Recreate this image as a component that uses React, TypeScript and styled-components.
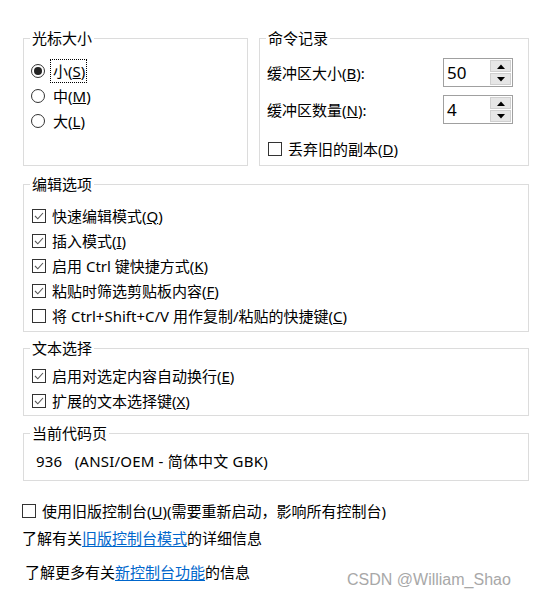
import React from "react";
import styled, { createGlobalStyle } from "styled-components";

const GlobalStyle = createGlobalStyle`
  html, body {
    margin: 0;
    background: #ffffff;
  }
  body {
    font-family: "Noto Sans", "Noto Sans CJK SC", sans-serif;
    font-size: 15px;
    color: #000;
  }
`;

const Page = styled.div`
  position: relative;
  width: 551px;
  height: 600px;
  padding: 29px 0 0 23px;
  box-sizing: border-box;
`;

const Content = styled.div`
  width: 506px;
`;

const TopRow = styled.div`
  display: grid;
  grid-template-columns: 225px 270px;
  column-gap: 11px;
  align-items: stretch;
`;

const Group = styled.fieldset<{ $mt?: number; $pt?: number; $pb?: number }>`
  margin: ${(p) => p.$mt ?? 0}px 0 0 0;
  padding: ${(p) => p.$pt ?? 0}px 7px ${(p) => p.$pb ?? 0}px 7px;
  border: 1px solid #dcdcdc;
  min-width: 0;
  box-sizing: border-box;
`;

const Legend = styled.legend`
  margin-left: -1px;
  padding: 0 2px;
  font-size: 15px;
  line-height: 18px;
  height: 18px;
`;

const Row = styled.div`
  display: flex;
  align-items: center;
  height: 25px;
  line-height: 20px;
  white-space: nowrap;
`;

const RadioCircle = styled.span<{ $checked?: boolean }>`
  width: 14px;
  height: 14px;
  border: 1px solid #333;
  border-radius: 50%;
  box-sizing: border-box;
  display: flex;
  align-items: center;
  justify-content: center;
  margin-right: 8px;
  flex: none;
  &::after {
    content: "";
    width: 8px;
    height: 8px;
    border-radius: 50%;
    background: #222;
    display: ${(p) => (p.$checked ? "block" : "none")};
  }
`;

const FocusText = styled.span<{ $focus?: boolean }>`
  outline: ${(p) => (p.$focus ? "1px dotted #000" : "none")};
  outline-offset: 0;
  padding: 1px 1px 1px 2px;
  margin-left: -2px;
`;

const Box = styled.span<{ $ml?: number }>`
  width: 14px;
  height: 14px;
  border: 1px solid #333;
  box-sizing: border-box;
  margin-left: ${(p) => p.$ml ?? 1}px;
  margin-right: 6px;
  flex: none;
  display: flex;
  align-items: center;
  justify-content: center;
`;

const FieldRow = styled.div<{ $mt?: number }>`
  display: grid;
  grid-template-columns: 176px 70px;
  align-items: center;
  margin-top: ${(p) => p.$mt ?? 0}px;
  height: 29px;
  white-space: nowrap;
`;

const Spinner = styled.div`
  display: flex;
  width: 70px;
  height: 29px;
  border: 1px solid #a0a0a0;
  box-sizing: border-box;
  background: #fff;
`;

const SpinValue = styled.div`
  flex: 1;
  padding-left: 3px;
  font-size: 17px;
  line-height: 27px;
`;

const SpinButtons = styled.div`
  width: 22px;
  display: flex;
  flex-direction: column;
  gap: 1px;
  padding: 1px 1px 1px 0;
  box-sizing: border-box;
`;

const SpinButton = styled.div`
  flex: 1;
  background: #e6e6e6;
  border: 1px solid #cfcfcf;
  display: flex;
  align-items: center;
  justify-content: center;
`;

const CodePage = styled.div`
  padding-left: 5px;
  line-height: 20px;
  height: 20px;
  white-space: pre;
  letter-spacing: 0.2px;
`;

const Bottom = styled.div`
  margin-top: 17px;
`;

const InfoLine = styled.div<{ $ml?: number; $mt?: number }>`
  margin-left: ${(p) => p.$ml ?? 0}px;
  margin-top: ${(p) => p.$mt ?? 0}px;
  height: 25px;
  line-height: 25px;
  white-space: nowrap;
`;

const Link = styled.a`
  color: #0066cc;
  text-decoration: underline;
  text-underline-offset: 2px;
`;

const Watermark = styled.div`
  position: absolute;
  left: 347px;
  top: 571px;
  font-family: "Liberation Sans", Arial, sans-serif;
  font-size: 16px;
  color: #a8a8a8;
  white-space: nowrap;
`;

const Check = () => (
  <svg width="12" height="12" viewBox="0 0 12 12">
    <path d="M2 6 L4.8 8.8 L10 3" fill="none" stroke="#555" strokeWidth="1.1" />
  </svg>
);

const Arrow = ({ up }: { up?: boolean }) => (
  <svg width="8" height="5" viewBox="0 0 8 5">
    <path d={up ? "M0 5 L4 0.5 L8 5 Z" : "M0 0 L8 0 L4 4.5 Z"} fill="#000" />
  </svg>
);

const CheckRow = ({ checked, children, ml }: { checked?: boolean; children: React.ReactNode; ml?: number }) => (
  <Row>
    <Box $ml={ml}>{checked && <Check />}</Box>
    <span>{children}</span>
  </Row>
);

const SpinBox = ({ value }: { value: string }) => (
  <Spinner>
    <SpinValue>{value}</SpinValue>
    <SpinButtons>
      <SpinButton>
        <Arrow up />
      </SpinButton>
      <SpinButton>
        <Arrow />
      </SpinButton>
    </SpinButtons>
  </Spinner>
);

export default function App() {
  return (
    <Page>
      <GlobalStyle />
      <Content>
        <TopRow>
          <Group $pt={11}>
            <Legend>光标大小</Legend>
            <Row>
              <RadioCircle $checked />
              <FocusText $focus>
                小(<u>S</u>)
              </FocusText>
            </Row>
            <Row>
              <RadioCircle />
              <span>
                中(<u>M</u>)
              </span>
            </Row>
            <Row>
              <RadioCircle />
              <span>
                大(<u>L</u>)
              </span>
            </Row>
          </Group>
          <Group $pt={11} $pb={4}>
            <Legend>命令记录</Legend>
            <FieldRow>
              <span>
                缓冲区大小(<u>B</u>):
              </span>
              <SpinBox value="50" />
            </FieldRow>
            <FieldRow $mt={8}>
              <span>
                缓冲区数量(<u>N</u>):
              </span>
              <SpinBox value="4" />
            </FieldRow>
            <div style={{ height: 12 }} />
            <CheckRow>
              丢弃旧的副本(<u>D</u>)
            </CheckRow>
          </Group>
        </TopRow>

        <Group $mt={9} $pt={10} $pb={3}>
          <Legend>编辑选项</Legend>
          <CheckRow checked>
            快速编辑模式(<u>Q</u>)
          </CheckRow>
          <CheckRow checked>
            插入模式(<u>I</u>)
          </CheckRow>
          <CheckRow checked>
            启用 Ctrl 键快捷方式(<u>K</u>)
          </CheckRow>
          <CheckRow checked>
            粘贴时筛选剪贴板内容(<u>F</u>)
          </CheckRow>
          <CheckRow>
            将 Ctrl+Shift+C/V 用作复制/粘贴的快捷键(<u>C</u>)
          </CheckRow>
        </Group>

        <Group $mt={7} $pt={6} $pb={2}>
          <Legend>文本选择</Legend>
          <CheckRow checked>
            启用对选定内容自动换行(<u>E</u>)
          </CheckRow>
          <CheckRow checked>
            扩展的文本选择键(<u>X</u>)
          </CheckRow>
        </Group>

        <Group $mt={8} $pt={9} $pb={9}>
          <Legend>当前代码页</Legend>
          <CodePage>{"936   (ANSI/OEM - 简体中文 GBK)"}</CodePage>
        </Group>

        <Bottom>
          <CheckRow ml={-1}>
            使用旧版控制台(<u>U</u>)(需要重新启动，影响所有控制台)
          </CheckRow>
          <InfoLine $ml={-1} $mt={3}>
            了解有关<Link>旧版控制台模式</Link>的详细信息
          </InfoLine>
          <InfoLine $ml={2} $mt={9}>
            了解更多有关<Link>新控制台功能</Link>的信息
          </InfoLine>
        </Bottom>
      </Content>
      <Watermark>CSDN @William_Shao</Watermark>
    </Page>
  );
}
